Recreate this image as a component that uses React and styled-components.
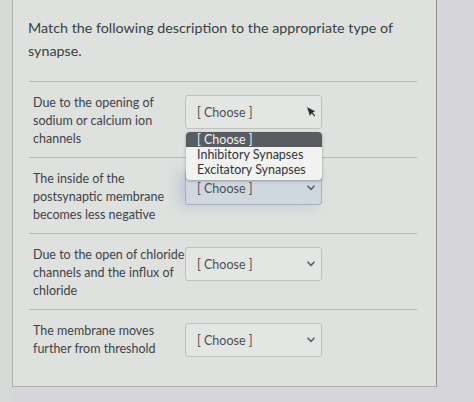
import React from 'react';
import { styled, createGlobalStyle } from 'styled-components';

const GlobalStyle = createGlobalStyle`
  html, body {
    margin: 0;
    padding: 0;
    background: #d6d5d8;
  }
  body {
    font-family: Lato, "Open Sans", sans-serif;
  }
`;

const items = [
  { lines: ['Due to the opening of', 'sodium or calcium ion', 'channels'], open: true },
  { lines: ['The inside of the', 'postsynaptic membrane', 'becomes less negative'], focused: true },
  { lines: ['Due to the open of chloride', 'channels and the influx of', 'chloride'] },
  { lines: ['The membrane moves', 'further from threshold'] },
];

const options = ['[ Choose ]', 'Inhibitory Synapses', 'Excitatory Synapses'];

const Chevron = () => (
  <svg width="8" height="6" viewBox="0 0 8 6">
    <path d="M1 1.2 L4 4.4 L7 1.2" fill="none" stroke="#5d6369" strokeWidth="1.6" strokeLinecap="round" strokeLinejoin="round" />
  </svg>
);

const Pointer = () => (
  <svg width="10" height="15" viewBox="0 0 10 15">
    <g transform="rotate(-18 3 3)">
      <path d="M2 1 L2 12 L4.6 9.6 L6.4 13.6 L8 12.8 L6.3 8.9 L9.6 8.6 Z" fill="#2b2d30" stroke="#e8e8e8" strokeWidth="0.7" />
    </g>
  </svg>
);

const App = () => {
  return (
    <Page>
      <GlobalStyle />
      <Panel>
        <Title>
          Match the following description to the appropriate type of<br />
          synapse.
        </Title>
        {items.map((item, i) => (
          <Row key={i}>
            <Description>
              {item.lines.map((l, j) => (
                <span key={j}>{l}<br /></span>
              ))}
            </Description>
            <SelectWrap>
              <Select $focused={item.focused}>
                <span>[ Choose ]</span>
                {item.open ? <Pointer /> : <Chevron />}
              </Select>
              {item.open && (
                <Menu>
                  {options.map((o, k) => (
                    <Option key={k} $active={k === 0}>{o}</Option>
                  ))}
                </Menu>
              )}
            </SelectWrap>
          </Row>
        ))}
      </Panel>
    </Page>
  );
};

const Page = styled.div`
  width: 474px;
  height: 402px;
  overflow: hidden;
  background: linear-gradient(90deg, #d7d9d6 0, #d7d9d6 12px, #d6d5d9 12px);
`;

const Panel = styled.div`
  margin-left: 12px;
  width: 425px;
  height: 387px;
  border: 1px solid #aeb0ae;
  border-right-color: #8d8e92;
  border-top: none;
  background: #dfe1de;
  padding: 16px 0 0 15px;
  box-sizing: border-box;
`;

const Title = styled.div`
  font-size: 14.3px;
  line-height: 23px;
  color: #393e42;
  margin-bottom: 19px;
`;

const Row = styled.div`
  width: 388px;
  height: 76px;
  box-sizing: border-box;
  margin-left: 1px;
  border-top: 1px solid #b8bab7;
  padding: 13px 0 0 4px;
  display: grid;
  grid-template-columns: 152px 137px;
  align-items: start;
`;

const Description = styled.div`
  font-size: 12.5px;
  line-height: 18px;
  color: #3e4347;
  white-space: nowrap;
  margin-top: -1px;
`;

const SelectWrap = styled.div`
  position: relative;
`;

const Select = styled.div`
  height: 34px;
  box-sizing: border-box;
  border: 1px solid ${p => (p.$focused ? '#a7b1bd' : '#bec1be')};
  border-radius: 3px;
  background: ${p => (p.$focused ? '#d0d7df' : '#e4e6e3')};
  box-shadow: ${p => (p.$focused ? '-6px 0 14px rgba(120, 150, 200, 0.35)' : 'none')};
  display: flex;
  align-items: center;
  justify-content: space-between;
  padding: 0 6px 0 11px;
  font-size: 12.5px;
  color: #4a5054;
`;

const Menu = styled.div`
  position: absolute;
  top: 37px;
  left: 1px;
  width: 136px;
  padding-bottom: 3px;
  background: #f2f2f0;
  border-radius: 4px;
  box-shadow: 0 1px 3px rgba(0, 0, 0, 0.3);
  overflow: hidden;
  z-index: 2;
`;

const Option = styled.div`
  height: 15px;
  line-height: 15px;
  padding-left: 11px;
  font-size: 12.5px;
  color: ${p => (p.$active ? '#f1f1f1' : '#30353a')};
  background: ${p => (p.$active ? '#595c60' : 'transparent')};
`;

export default App;
